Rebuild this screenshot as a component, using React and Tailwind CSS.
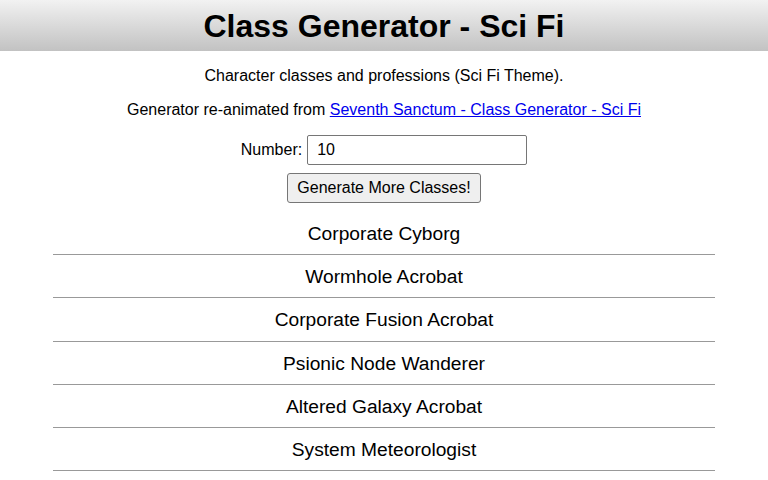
import React, { useState } from "react";

const classes = [
  "Corporate Cyborg",
  "Wormhole Acrobat",
  "Corporate Fusion Acrobat",
  "Psionic Node Wanderer",
  "Altered Galaxy Acrobat",
  "System Meteorologist",
  "Stellar Negotiator",
  "Quantum Bounty Hunter",
  "Nanite Medic",
  "Void Scout",
];

export default function App() {
  const [count, setCount] = useState("10");

  return (
    <div className="min-h-screen bg-white text-black font-['Liberation_Sans',Arial,sans-serif]">
      {/* header bar */}
      <div className="h-[51px] flex items-center justify-center bg-gradient-to-b from-[#f2f2f2] to-[#c2c2c2]">
        <h1 className="text-[32px] font-bold leading-none">Class Generator - Sci Fi</h1>
      </div>

      <p className="mt-4 text-center text-base leading-[18px]">
        Character classes and professions (Sci Fi Theme).
      </p>
      <p className="mt-4 text-center text-base leading-[18px]">
        Generator re-animated from{" "}
        <a href="#" className="text-[#0000ee] underline">
          Seventh Sanctum - Class Generator - Sci Fi
        </a>
      </p>

      <div className="mt-4 flex items-center justify-center gap-[5px]">
        <label className="text-base">Number:</label>
        <input
          type="text"
          value={count}
          onChange={e => setCount(e.target.value)}
          className="w-[220px] h-[30px] border border-[#767676] rounded-[2px] px-[9px] text-base outline-none"
        />
      </div>
      <div className="mt-2 flex justify-center">
        <button className="h-[30px] px-[9px] bg-[#efefef] border border-[#767676] rounded-[3px] text-base">
          Generate More Classes!
        </button>
      </div>

      <div className="mt-[9px] mx-[53px]">
        {classes.map((c, i) => (
          <div key={i} className="pt-[11px] pb-[9px] border-b border-[#999999] text-center text-[19.2px] leading-[22.2px]">
            {c}
          </div>
        ))}
      </div>
    </div>
  );
}
